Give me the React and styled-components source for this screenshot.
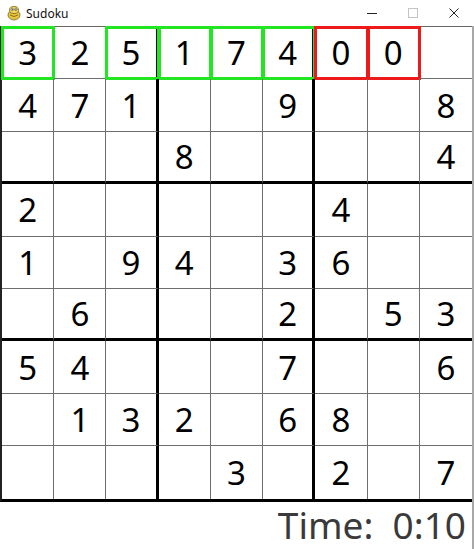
import styled, { createGlobalStyle } from "styled-components";

const GlobalStyle = createGlobalStyle`
  html, body {
    margin: 0;
    padding: 0;
    background: #ffffff;
  }
`;

const puzzle = [
  [3, 2, 5, 1, 7, 4, 0, 0, null],
  [4, 7, 1, null, null, 9, null, null, 8],
  [null, null, null, 8, null, null, null, null, 4],
  [2, null, null, null, null, null, 4, null, null],
  [1, null, 9, 4, null, 3, 6, null, null],
  [null, 6, null, null, null, 2, null, 5, 3],
  [5, 4, null, null, null, 7, null, null, 6],
  [null, 1, 3, 2, null, 6, 8, null, null],
  [null, null, null, null, 3, null, 2, null, 7],
];

// marks on the first row: g = correct guess, r = wrong
const marks = { "0-0": "g", "0-2": "g", "0-3": "g", "0-4": "g", "0-5": "g", "0-6": "r", "0-7": "r" };

const PygameIcon = () => (
  <svg width="16" height="16" viewBox="0 0 16 16">
    <ellipse cx="8" cy="10" rx="6" ry="5" fill="#e8c33a" stroke="#7a6a2a" strokeWidth="0.8" />
    <ellipse cx="8" cy="5" rx="4.5" ry="3.6" fill="#f2d552" stroke="#7a6a2a" strokeWidth="0.8" />
    <circle cx="6.2" cy="4.4" r="1.2" fill="#fff" stroke="#333" strokeWidth="0.5" />
    <circle cx="9.8" cy="4.4" r="1.2" fill="#fff" stroke="#333" strokeWidth="0.5" />
    <circle cx="6.3" cy="4.5" r="0.5" fill="#222" />
    <circle cx="9.9" cy="4.5" r="0.5" fill="#222" />
    <path d="M4 10 Q8 13 12 10" stroke="#6b5a20" strokeWidth="0.8" fill="none" />
  </svg>
);

const App = () => {
  return (
    <>
      <GlobalStyle />
      <Window>
        <TitleBar>
          <TitleLeft>
            <PygameIcon />
            <Title>Sudoku</Title>
          </TitleLeft>
          <Controls>
            <Control>
              <svg width="10" height="10" viewBox="0 0 10 10">
                <line x1="0" y1="5.5" x2="10" y2="5.5" stroke="#222" strokeWidth="1" />
              </svg>
            </Control>
            <Control>
              <svg width="10" height="10" viewBox="0 0 10 10">
                <rect x="0.5" y="0.5" width="9" height="9" fill="none" stroke="#c4c4c4" strokeWidth="1" />
              </svg>
            </Control>
            <Control>
              <svg width="10" height="10" viewBox="0 0 10 10">
                <path d="M0.5 0.5 L9.5 9.5 M9.5 0.5 L0.5 9.5" stroke="#222" strokeWidth="1" />
              </svg>
            </Control>
          </Controls>
        </TitleBar>
        <Content>
          <Board>
            {puzzle.map((row, r) =>
              row.map((v, c) => (
                <Cell key={`${r}-${c}`} $row={r} $col={c} $mark={marks[`${r}-${c}`]}>
                  {v === null ? "" : v}
                </Cell>
              ))
            )}
          </Board>
          <Footer>
            <Timer>Time:&nbsp; 0:10</Timer>
          </Footer>
        </Content>
      </Window>
    </>
  );
};

export default App;

const Window = styled.div`
  width: 474px;
  height: 549px;
  display: flex;
  flex-direction: column;
  background: #ffffff;
`;

const TitleBar = styled.div`
  height: 26px;
  flex-shrink: 0;
  display: flex;
  align-items: center;
  justify-content: space-between;
  padding-left: 6px;
  box-sizing: border-box;
`;

const TitleLeft = styled.div`
  display: flex;
  align-items: center;
  gap: 4px;
`;

const Title = styled.span`
  font-family: "Noto Sans", "Liberation Sans", sans-serif;
  font-size: 12px;
  color: #111;
`;

const Controls = styled.div`
  display: flex;
  height: 100%;
`;

const Control = styled.div`
  width: 41px;
  display: flex;
  align-items: center;
  justify-content: center;
`;

const Content = styled.div`
  flex: 1;
  display: flex;
  flex-direction: column;
  border-right: 2px solid #a8a8a8;
`;

const Board = styled.div`
  width: 472px;
  flex-shrink: 0;
  display: grid;
  grid-template-columns: repeat(9, 1fr);
  grid-template-rows: repeat(9, 52.4px);
  border-left: 2px solid #222;
  border-top: 1px solid #666;
  border-bottom: 3px solid #000;
  box-sizing: border-box;
`;

const markColor = { g: "#22e622", r: "#ee1a1a" };

const Cell = styled.div`
  display: flex;
  align-items: center;
  justify-content: center;
  font-family: "Noto Sans", sans-serif;
  font-size: 33px;
  color: #000;
  box-sizing: border-box;
  border-right: ${(p) => (p.$col === 2 || p.$col === 5 ? "3px solid #000" : p.$col === 8 ? "none" : "1px solid #6e6e6e")};
  border-bottom: ${(p) => (p.$row === 2 || p.$row === 5 ? "3px solid #000" : p.$row === 8 ? "none" : "1px solid #6e6e6e")};
  outline: ${(p) => (p.$mark ? `3px solid ${markColor[p.$mark]}` : "none")};
  outline-offset: -2px;
`;

const Footer = styled.div`
  flex: 1;
  display: flex;
  align-items: center;
  justify-content: flex-end;
  padding-right: 6px;
`;

const Timer = styled.div`
  font-family: "Noto Sans", sans-serif;
  font-size: 37px;
  line-height: 42px;
  color: #3a3a3a;
`;
